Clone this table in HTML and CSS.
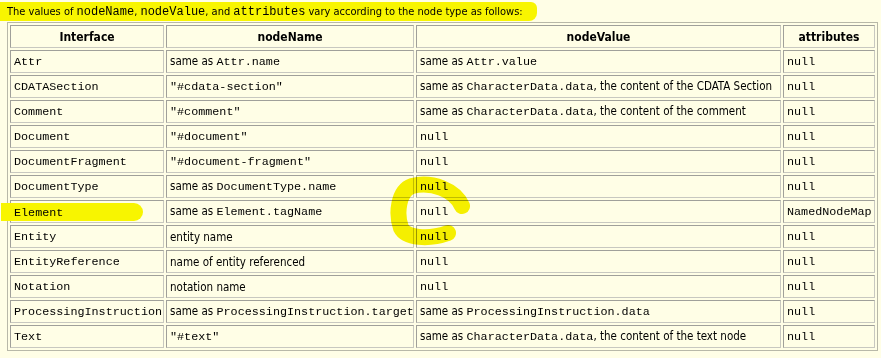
FILE: index.html
```html
<!DOCTYPE html>
<html>
<head>
<meta charset="utf-8">
<link rel="stylesheet" href="styles.css">
</head>
<body>
<div class="page">
  <p class="intro"><span class="hl">The values of <code>nodeName</code>, <code>nodeValue</code>, and <code>attributes</code> vary according to the node type as follows:</span></p>
  <table class="nodes">
    <thead>
      <tr><th class="c1">Interface</th><th class="c2">nodeName</th><th class="c3">nodeValue</th><th class="c4">attributes</th></tr>
    </thead>
    <tbody>
      <tr><td><code>Attr</code></td><td>same as <code>Attr.name</code></td><td>same as <code>Attr.value</code></td><td><code>null</code></td></tr>
      <tr><td><code>CDATASection</code></td><td><code>"#cdata-section"</code></td><td>same as <code>CharacterData.data</code>, the content of the CDATA Section</td><td><code>null</code></td></tr>
      <tr><td><code>Comment</code></td><td><code>"#comment"</code></td><td>same as <code>CharacterData.data</code>, the content of the comment</td><td><code>null</code></td></tr>
      <tr><td><code>Document</code></td><td><code>"#document"</code></td><td><code>null</code></td><td><code>null</code></td></tr>
      <tr><td><code>DocumentFragment</code></td><td><code>"#document-fragment"</code></td><td><code>null</code></td><td><code>null</code></td></tr>
      <tr><td><code>DocumentType</code></td><td>same as <code>DocumentType.name</code></td><td><code>null</code></td><td><code>null</code></td></tr>
      <tr><td><span class="mark"><code>Element</code></span></td><td>same as <code>Element.tagName</code></td><td><code>null</code></td><td><code>NamedNodeMap</code></td></tr>
      <tr><td><code>Entity</code></td><td>entity name</td><td><code>null</code></td><td><code>null</code></td></tr>
      <tr><td><code>EntityReference</code></td><td>name of entity referenced</td><td><code>null</code></td><td><code>null</code></td></tr>
      <tr><td><code>Notation</code></td><td>notation name</td><td><code>null</code></td><td><code>null</code></td></tr>
      <tr><td><code>ProcessingInstruction</code></td><td>same as <code>ProcessingInstruction.target</code></td><td>same as <code>ProcessingInstruction.data</code></td><td><code>null</code></td></tr>
      <tr><td><code>Text</code></td><td><code>"#text"</code></td><td>same as <code>CharacterData.data</code>, the content of the text node</td><td><code>null</code></td></tr>
    </tbody>
  </table>
  <svg class="scribble" width="881" height="358" viewBox="0 0 881 358">
    <path d="M462 206 C 455 190, 432 181, 412 186 C 398 191, 396 214, 401 228 C 406 238, 428 240, 448 233" fill="none" stroke="#f5f000" stroke-width="16" stroke-linecap="round" stroke-linejoin="round"/>
  </svg>
</div>
</body>
</html>
```

FILE: styles.css
```css
html, body {
  margin: 0;
  padding: 0;
  background: #fffee6;
}
.page {
  position: relative;
  width: 881px;
  height: 358px;
  overflow: hidden;
  padding: 0 0 0 7px;
  box-sizing: border-box;
  font-family: "DejaVu Sans Condensed", "DejaVu Sans", sans-serif;
  font-size: 11.5px;
  color: #000;
}
code {
  font-family: "Liberation Mono", "Courier New", monospace;
  font-size: 11.75px;
  line-height: 16px;
}
.intro {
  margin: 0;
  height: 22px;
  line-height: 19px;
  padding-top: 2px;
  box-sizing: border-box;
  font-size: 11px;
}
.intro .hl {
  display: inline-block;
  background: #f8f500;
  margin-left: -7px;
  padding: 0 14px 0 7px;
  line-height: 19px;
  border-radius: 0 6px 8px 0;
}
.intro code {
  font-size: 12px;
}
.nodes {
  border-collapse: separate;
  border-spacing: 2px;
  border: 1px solid #b8b8a8;
  table-layout: fixed;
  width: 871px;
}
.nodes tr {
  height: 23px;
}
.nodes th, .nodes td {
  box-sizing: border-box;
  height: 23px;
  padding: 0 3px;
  border: 1px solid #a8a8a0;
  border-top-color: #a0a09a;
  border-left-color: #a0a09a;
  border-right-color: #c8c8c0;
  border-bottom-color: #c8c8c0;
  white-space: nowrap;
  vertical-align: middle;
  line-height: 16px;
}
.nodes th {
  font-weight: bold;
  text-align: center;
  font-size: 12px;
}
.nodes td {
  text-align: left;
}
.c1 { width: 154px; }
.c2 { width: 248px; }
.c3 { width: 365px; }
.c4 { width: 92px; }
.mark {
  display: inline-block;
  background: #f8f500;
  margin-left: -13px;
  padding-left: 13px;
  width: 129px;
  line-height: 18px;
  border-radius: 0 9px 9px 0;
}
.scribble {
  position: absolute;
  left: 0;
  top: 0;
  mix-blend-mode: multiply;
  pointer-events: none;
}
```
